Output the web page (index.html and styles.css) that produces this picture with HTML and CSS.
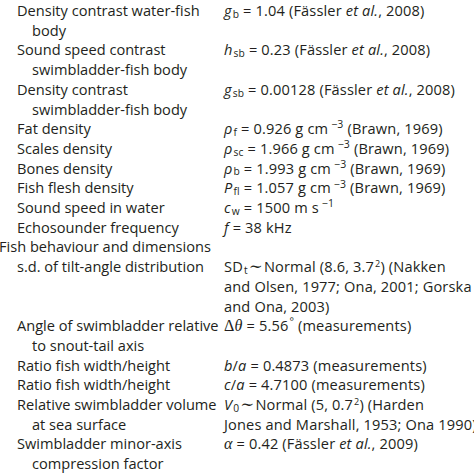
FILE: index.html
```html
<!DOCTYPE html>
<html>
<head>
<meta charset="utf-8">
<link rel="stylesheet" href="styles.css">
</head>
<body>
<div class="tbl">
  <div class="l">Density contrast water-fish<br>body</div>
  <div class="r"><i>g</i><sub>b</sub> = 1.04 (Fässler <i>et al.</i>, 2008)</div>

  <div class="l">Sound speed contrast<br>swimbladder-fish body</div>
  <div class="r"><i>h</i><sub>sb</sub> = 0.23 (Fässler <i>et al.</i>, 2008)</div>

  <div class="l">Density contrast<br>swimbladder-fish body</div>
  <div class="r"><i>g</i><sub>sb</sub> = 0.00128 (Fässler <i>et al.</i>, 2008)</div>

  <div class="l">Fat density</div>
  <div class="r"><i>ρ</i><sub>f</sub> = 0.926 g cm<sup>−3</sup> (Brawn, 1969)</div>

  <div class="l">Scales density</div>
  <div class="r"><i>ρ</i><sub>sc</sub> = 1.966 g cm<sup>−3</sup> (Brawn, 1969)</div>

  <div class="l">Bones density</div>
  <div class="r"><i>ρ</i><sub>b</sub> = 1.993 g cm<sup>−3</sup> (Brawn, 1969)</div>

  <div class="l">Fish flesh density</div>
  <div class="r"><i>P</i><sub>fl</sub> = 1.057 g cm<sup>−3</sup> (Brawn, 1969)</div>

  <div class="l">Sound speed in water</div>
  <div class="r"><i>c</i><sub>w</sub> = 1500 m s<sup>−1</sup></div>

  <div class="l">Echosounder frequency</div>
  <div class="r"><i>f</i> = 38 kHz</div>

  <div class="sec">Fish behaviour and dimensions</div>

  <div class="l">s.d. of tilt-angle distribution</div>
  <div class="r">SD<sub>t</sub><span class="op">∼</span>Normal (8.6, 3.7<sup class="sq">2</sup>) (Nakken<br>and Olsen, 1977; Ona, 2001; Gorska<br>and Ona, 2003)</div>

  <div class="l">Angle of swimbladder relative<br>to snout-tail axis</div>
  <div class="r"><span class="gr">Δ</span><i class="gr">θ</i> = 5.56<sup class="deg">°</sup> (measurements)</div>

  <div class="l">Ratio fish width/height</div>
  <div class="r"><i>b</i>/<i>a</i> = 0.4873 (measurements)</div>

  <div class="l">Ratio fish width/height</div>
  <div class="r"><i>c</i>/<i>a</i> = 4.7100 (measurements)</div>

  <div class="l">Relative swimbladder volume<br>at sea surface</div>
  <div class="r"><i>V</i><sub>0</sub><span class="op">∼</span>Normal (5, 0.7<sup class="sq">2</sup>) (Harden<br>Jones and Marshall, 1953; Ona 1990)</div>

  <div class="l">Swimbladder minor-axis<br>compression factor</div>
  <div class="r"><i class="gr">α</i> = 0.42 (Fässler <i>et al.</i>, 2009)</div>
</div>
</body>
</html>
```

FILE: styles.css
```css
html, body {
  margin: 0;
  padding: 0;
  background: #ffffff;
  overflow: hidden;
}
body {
  width: 474px;
  height: 474px;
  font-family: "Open Sans", "Noto Sans", sans-serif;
  font-size: 14.6px;
  line-height: 19.7px;
  color: #231f20;
}
.tbl {
  display: grid;
  grid-template-columns: 207px 267px;
  padding: 1px 0 0 17px;
}
.l {
  padding-left: 15px;
  text-indent: -15px;
}
.r {
  white-space: nowrap;
  letter-spacing: 0.15px;
}
.sec {
  grid-column: 1 / 3;
  margin-left: -18px;
}
sub {
  font-size: 0.7em;
  vertical-align: -0.18em;
  line-height: 0;
  margin-left: 1px;
}
sup {
  font-size: 0.72em;
  vertical-align: 0.55em;
  line-height: 0;
  margin-left: 3px;
}
sup.sq {
  margin-left: 1px;
  font-size: 0.62em;
}
sup.deg {
  margin-left: 1px;
}
.op {
  font-family: "DejaVu Serif", serif;
  font-size: 1.15em;
  margin: 0 1px;
}
.gr {
  font-family: "Liberation Serif", serif;
  font-size: 1.1em;
}
i {
  font-style: italic;
}
```
